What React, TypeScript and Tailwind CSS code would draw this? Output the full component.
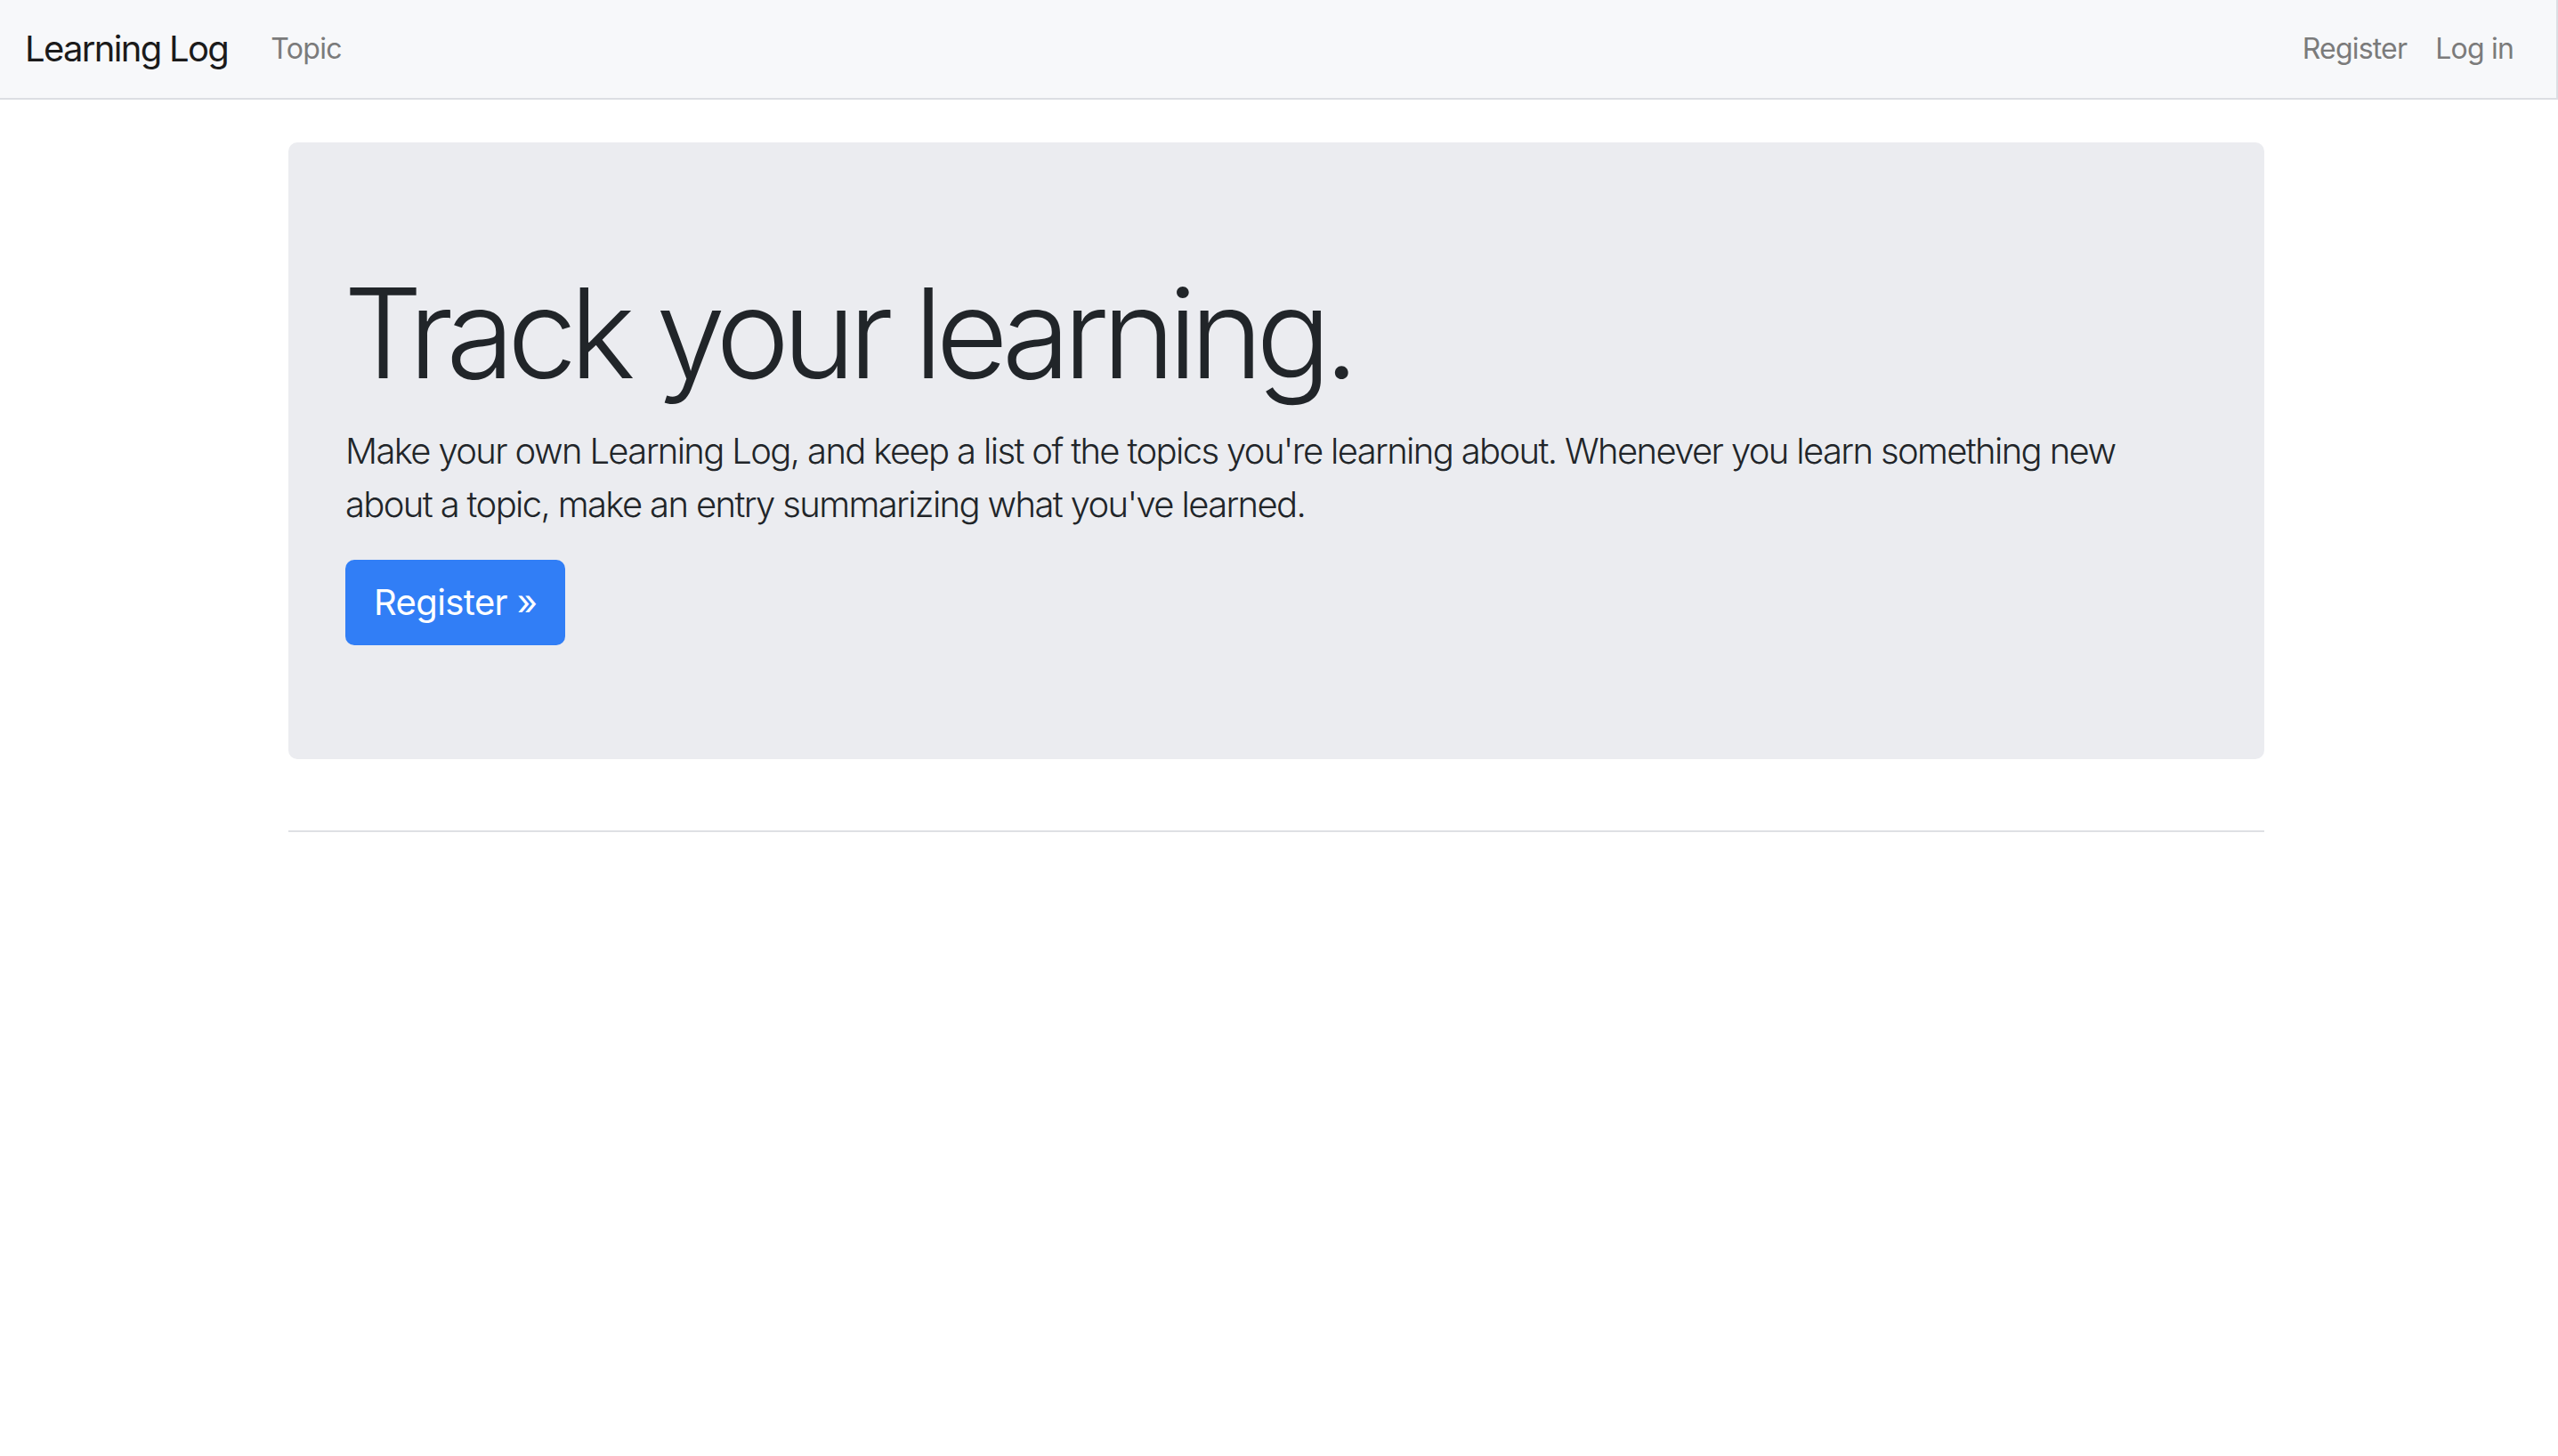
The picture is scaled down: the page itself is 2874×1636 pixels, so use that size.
import React from "react";

export default function App() {
  return (
    <div
      className="min-h-screen bg-white text-[#212529]"
      style={{ fontFamily: "Inter, 'Noto Sans', 'Liberation Sans', sans-serif" }}
    >
      <nav className="h-[112px] flex items-center justify-between bg-[#f7f8fa] border-b-2 border-r-2 border-[#dcdee3] pl-[28px] pr-[32px]">
        <div className="flex items-center">
          <a className="text-[40px] leading-[60px] tracking-[-0.042em] text-[#1b1b1b] mr-[32px] cursor-pointer">Learning Log</a>
          <a className="text-[32px] leading-[48px] tracking-[-0.02em] text-[#7b7b7b] px-[16px] cursor-pointer">Topic</a>
        </div>
        <div className="flex items-center">
          <a className="text-[32px] leading-[48px] tracking-[-0.025em] text-[#7b7b7b] px-[16px] cursor-pointer">Register</a>
          <a className="text-[32px] leading-[48px] tracking-[-0.025em] text-[#7b7b7b] px-[16px] cursor-pointer">Log in</a>
        </div>
      </nav>

      <div className="pr-[6px]">
        <div className="w-[2220px] mx-auto">
          <section className="mt-[48px] bg-[#ebecf0] rounded-[10px] px-[64px] py-[128px]">
            <h1 className="text-[140px] leading-[172.8px] font-light tracking-[-0.058em] mb-[16px] -ml-[2px]">
              Track your learning.
            </h1>
            <p className="text-[40px] leading-[60px] font-light tracking-[-0.041em] mb-[32px]">
              Make your own Learning Log, and keep a list of the topics you're learning about. Whenever you learn something new
              <br />
              about a topic, make an entry summarizing what you've learned.
            </p>
            <a className="inline-flex items-center h-[96px] px-[32px] rounded-[10px] bg-[#317ef6] text-white text-[40px] leading-[60px] tracking-[-0.015em] cursor-pointer">
              Register &raquo;
            </a>
          </section>
          <hr className="mt-[80px] border-0 border-t-2 border-[#dee0e4]" />
        </div>
      </div>
    </div>
  );
}
